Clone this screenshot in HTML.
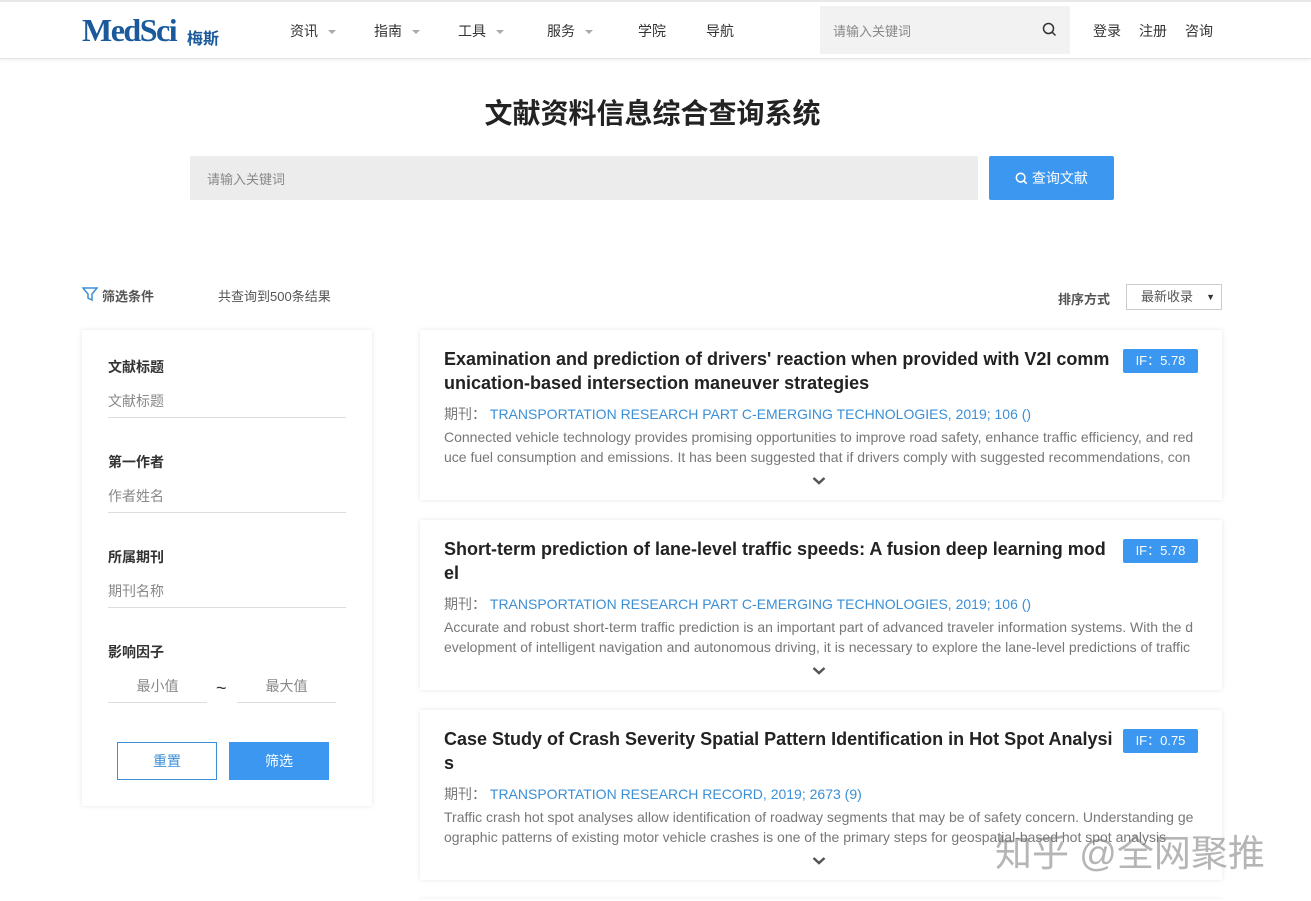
<!DOCTYPE html><html style="width:1311px;height:901px;overflow:hidden"><head><meta charset="utf-8"><style>
*{margin:0;padding:0;box-sizing:border-box}
body{width:1311px;height:901px;overflow:hidden;background:#fff;font-family:"Liberation Sans","Noto Sans CJK SC",sans-serif;color:#333;position:relative}
.a{position:absolute;white-space:nowrap}
.hdr{position:absolute;left:0;top:0;width:1311px;height:59px;border-top:2px solid #e8e8e8;border-bottom:1px solid #e4e4e4;box-shadow:0 2px 3px rgba(0,0,0,.05)}
.nav{font-size:14px;color:#333;top:21px}
.tri{display:inline-block;width:0;height:0;border-left:4px solid transparent;border-right:4px solid transparent;border-top:4px solid #aaa;margin-left:10px;vertical-align:middle}
.card{position:absolute;left:420px;width:802px;height:170px;background:#fff;box-shadow:0 0 5px rgba(0,0,0,.1)}
.card h3{position:absolute;left:24px;top:17px;width:670px;font-size:18px;line-height:24px;font-weight:bold;color:#222;word-break:break-all}
.if{position:absolute;left:703px;top:19px;width:75px;height:24px;background:#3b97f0;color:#fff;font-size:13px;text-align:center;line-height:24px;border-radius:2px}
.jn{position:absolute;left:24px;top:74px;font-size:14px;color:#777;white-space:nowrap}
.jn span{color:#3b8fd6}
.ab{position:absolute;left:24px;top:97px;width:754px;height:40px;overflow:hidden;font-size:14px;line-height:20px;color:#777;word-break:break-all}
.chev{position:absolute;left:392px;top:146px}
.side{position:absolute;left:82px;top:330px;width:290px;height:476px;box-shadow:0 0 5px rgba(0,0,0,.1)}
.lbl{position:absolute;left:26px;font-size:14px;font-weight:bold;color:#333}
.inp{position:absolute;left:26px;width:238px;height:34px;border-bottom:1px solid #ddd;font-size:14px;color:#888;line-height:34px}
</style></head><body>
<div class="hdr"></div>
<div class="a" style="left:82px;top:12px;font-family:'Liberation Serif',serif;font-weight:bold;font-size:32px;color:#1a5a9c;letter-spacing:-1.5px">MedSci</div>
<div class="a" style="left:187px;top:25px;font-size:16px;font-weight:bold;color:#1a5a9c">梅斯</div>
<div class="a nav" style="left:290px">资讯<span class="tri"></span></div>
<div class="a nav" style="left:374px">指南<span class="tri"></span></div>
<div class="a nav" style="left:458px">工具<span class="tri"></span></div>
<div class="a nav" style="left:547px">服务<span class="tri"></span></div>
<div class="a nav" style="left:638px">学院</div>
<div class="a nav" style="left:706px">导航</div>
<div class="a" style="left:820px;top:6px;width:250px;height:48px;background:#f2f2f2"></div>
<div class="a" style="left:833px;top:21px;font-size:13px;color:#888">请输入关键词</div>
<svg class="a" style="left:1042px;top:22px" width="15" height="15" viewBox="0 0 15 15"><circle cx="6.5" cy="6.5" r="5" fill="none" stroke="#333" stroke-width="1.5"/><path d="M10 10l3.5 3.5" stroke="#333" stroke-width="1.5"/></svg>
<div class="a nav" style="left:1093px">登录</div>
<div class="a nav" style="left:1139px">注册</div>
<div class="a nav" style="left:1185px">咨询</div>

<div class="a" style="left:0;width:1311px;top:92px;text-align:center;font-size:28px;font-weight:bold;color:#222;padding-right:6px">文献资料信息综合查询系统</div>
<div class="a" style="left:190px;top:156px;width:788px;height:44px;background:#ececec;border-radius:2px"></div>
<div class="a" style="left:207px;top:169px;font-size:13px;color:#888">请输入关键词</div>
<div class="a" style="left:989px;top:156px;width:125px;height:44px;background:#3b97f0;border-radius:2px;color:#fff;font-size:14px;line-height:44px;text-align:center">
<svg width="13" height="13" viewBox="0 0 15 15" style="vertical-align:-2px"><circle cx="6.5" cy="6.5" r="5" fill="none" stroke="#fff" stroke-width="1.8"/><path d="M10 10l3.5 3.5" stroke="#fff" stroke-width="1.8"/></svg> 查询文献</div>

<svg class="a" style="left:82px;top:286px" width="16" height="16" viewBox="0 0 16 16"><path d="M1 2h14l-5 6v6l-4-2V8z" fill="none" stroke="#3b8fd6" stroke-width="1.5"/></svg>
<div class="a" style="left:102px;top:286px;font-size:13px;font-weight:bold;color:#555">筛选条件</div>
<div class="a" style="left:218px;top:286px;font-size:13px;color:#555">共查询到500条结果</div>
<div class="a" style="left:1058px;top:289px;font-size:13px;font-weight:bold;color:#555">排序方式</div>
<div class="a" style="left:1126px;top:284px;width:96px;height:26px;border:1px solid #ccc;font-size:13px;color:#555;line-height:24px;padding-left:14px">最新收录<span style="position:absolute;right:6px;font-size:9px;color:#333">▼</span></div>

<div class="side">
<div class="lbl" style="top:27px">文献标题</div><div class="inp" style="top:54px">文献标题</div>
<div class="lbl" style="top:122px">第一作者</div><div class="inp" style="top:149px">作者姓名</div>
<div class="lbl" style="top:217px">所属期刊</div><div class="inp" style="top:244px">期刊名称</div>
<div class="lbl" style="top:312px">影响因子</div>
<div class="inp" style="top:339px;width:99px;text-align:center">最小值</div>
<div class="a" style="left:134px;top:348px;font-size:18px;color:#333">~</div>
<div class="inp" style="top:339px;left:155px;width:99px;text-align:center">最大值</div>
<div class="a" style="left:35px;top:412px;width:100px;height:38px;border:1px solid #3b8fd6;color:#3b8fd6;font-size:14px;text-align:center;line-height:36px">重置</div>
<div class="a" style="left:147px;top:412px;width:100px;height:38px;background:#3b97f0;color:#fff;font-size:14px;text-align:center;line-height:38px">筛选</div>
</div>

<div class="card" style="top:330px"><h3>Examination and prediction of drivers' reaction when provided with V2I communication-based intersection maneuver strategies</h3><div class="if">IF：5.78</div>
<div class="jn">期刊： <span>TRANSPORTATION RESEARCH PART C-EMERGING TECHNOLOGIES, 2019; 106 ()</span></div>
<div class="ab">Connected vehicle technology provides promising opportunities to improve road safety, enhance traffic efficiency, and reduce fuel consumption and emissions. It has been suggested that if drivers comply with suggested recommendations, con</div>
<svg class="chev" width="14" height="10" viewBox="0 0 14 10"><path d="M1.5 2l5.5 5 5.5-5" fill="none" stroke="#555" stroke-width="2.5"/></svg></div>

<div class="card" style="top:520px"><h3>Short-term prediction of lane-level traffic speeds: A fusion deep learning model</h3><div class="if">IF：5.78</div>
<div class="jn">期刊： <span>TRANSPORTATION RESEARCH PART C-EMERGING TECHNOLOGIES, 2019; 106 ()</span></div>
<div class="ab">Accurate and robust short-term traffic prediction is an important part of advanced traveler information systems. With the development of intelligent navigation and autonomous driving, it is necessary to explore the lane-level predictions of traffic</div>
<svg class="chev" width="14" height="10" viewBox="0 0 14 10"><path d="M1.5 2l5.5 5 5.5-5" fill="none" stroke="#555" stroke-width="2.5"/></svg></div>

<div class="card" style="top:710px"><h3>Case Study of Crash Severity Spatial Pattern Identification in Hot Spot Analysis</h3><div class="if">IF：0.75</div>
<div class="jn">期刊： <span>TRANSPORTATION RESEARCH RECORD, 2019; 2673 (9)</span></div>
<div class="ab">Traffic crash hot spot analyses allow identification of roadway segments that may be of safety concern. Understanding geographic patterns of existing motor vehicle crashes is one of the primary steps for geospatial-based hot spot analysis</div>
<svg class="chev" width="14" height="10" viewBox="0 0 14 10"><path d="M1.5 2l5.5 5 5.5-5" fill="none" stroke="#555" stroke-width="2.5"/></svg></div>
<div class="card" style="top:899px;height:2px"></div>
<div class="a" style="left:995px;top:823px;font-size:37px;color:rgba(120,120,120,.55)">知乎 @全网聚推</div>
</body></html>
